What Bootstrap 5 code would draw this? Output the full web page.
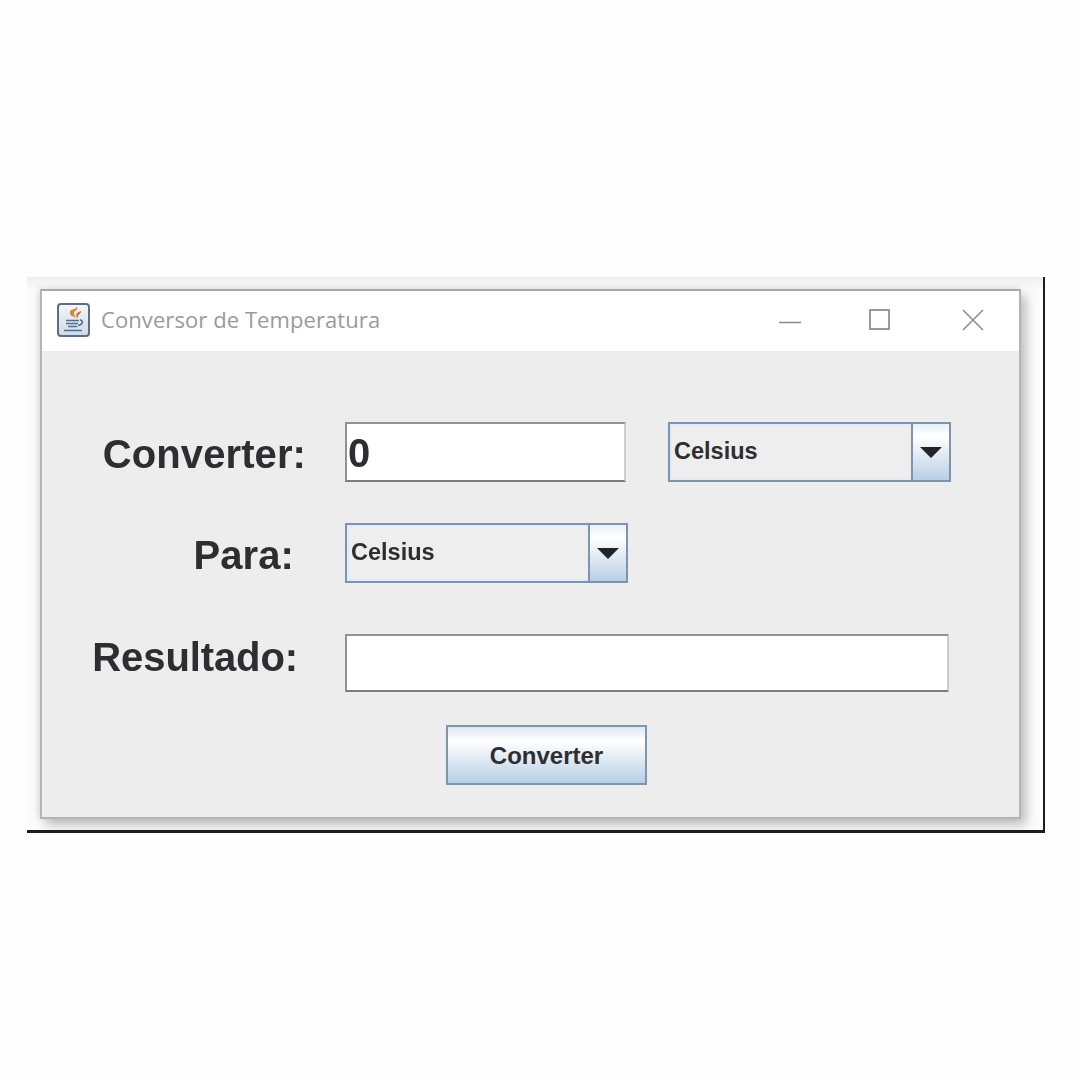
<!DOCTYPE html>
<html lang="pt">
<head>
<meta charset="UTF-8" />
<title>Conversor de Temperatura</title>
<link href="https://cdn.jsdelivr.net/npm/bootstrap@5.3.0/dist/css/bootstrap.min.css" rel="stylesheet" />
<style>
  html, body { background: #fefefe; }
  .shot-area { padding: 277px 0 0 27px; }
  .shot-frame {
    width: 1018px; height: 556px; padding: 12px 0 0 13px;
    border-right: 2px solid #1c1c24; border-bottom: 3px solid #1c1c24;
    background: linear-gradient(180deg, #efefef, #f8f8f8 10px, #fcfcfc 14px);
  }
  .app-window {
    width: 981px; height: 530px; background: #ededed;
    border: 2px solid #b4b4b4; border-top-color: #a8a8a8;
    box-shadow: 5px 6px 11px rgba(0,0,0,.26), -3px -1px 7px rgba(0,0,0,.09);
    filter: blur(.6px);
    font-family: "Liberation Sans", Arial, sans-serif; color: #2e2e32;
  }
  .app-title {
    height: 60px; background: #fff; padding-left: 15px; padding-bottom: 3px;
    font-family: "Open Sans", "Noto Sans", sans-serif; font-size: 22px; letter-spacing: .08px; color: #9a9a9a;
  }
  .app-title-text { margin-left: 11px; }
  .win-btn { width: 93px; height: 57px; }
  .tb-min { margin-left: 6px; }
  .app-body { padding-top: 71px; }
  .form-line { display: flex; align-items: center; }
  .line-1 { height: 60px; }
  .line-2 { height: 60px; margin-top: 41px; }
  .line-3 { height: 58px; margin-top: 51px; }
  .line-4 { height: 60px; margin-top: 33px; padding-left: 404px; }
  .label-col { width: 303px; flex: none; display: flex; justify-content: flex-end; font-weight: 700; font-size: 40px; line-height: 46px; }
  .lbl-converter { padding-right: 39px; padding-top: 3px; letter-spacing: .1px; }
  .lbl-para { padding-right: 51px; padding-top: 4px; letter-spacing: .1px; }
  .lbl-result { padding-right: 47px; padding-bottom: 13px; letter-spacing: -.1px; }
  .java-field.form-control {
    height: 100%; border-radius: 0; padding: 2px 0 0 1px; background: #fff;
    border: 2px solid #929292; border-right-color: #cccccc; border-bottom-color: #7c7c7c;
    font-family: "Liberation Sans", Arial, sans-serif; font-weight: 700; font-size: 40px; color: #2e2e32;
    box-shadow: none;
  }
  .field-short { width: 281px; flex: none; }
  .field-long { width: 604px; flex: none; }
  .java-combo {
    height: 60px; width: 283px; flex: none; display: flex; background: #eeeeee;
    border: 2px solid #7e93ae; box-shadow: inset 0 0 0 2px #e2ecf6;
    font-weight: 700; font-size: 23.5px;
  }
  .combo-gap { margin-left: 42px; }
  .combo-text { flex: 1; padding-left: 4px; }
  .combo-arrow {
    width: 38px; border-left: 2px solid #7e93ae;
    background: linear-gradient(180deg, #e8eff6 0%, #ffffff 22%, #dbe6f1 62%, #b8cfe5 100%);
  }
  .java-btn.btn {
    width: 201px; height: 60px; padding: 2px 0 0; border-radius: 0; border: 2px solid #7f94ae;
    background: linear-gradient(180deg, #dfe8f2 0%, #ffffff 25%, #d9e5f0 65%, #b8cfe5 100%);
    font-family: "Liberation Sans", Arial, sans-serif; font-weight: 700; font-size: 24px; color: #2e2e32;
  }
</style>
</head>
<body>
<div class="shot-area">
  <div class="shot-frame">
    <div class="app-window">
      <div class="app-title d-flex align-items-center">
        <svg width="33" height="34" viewBox="0 0 33 34">
          <defs><linearGradient id="iconBg" x1="0" y1="0" x2="0" y2="1"><stop offset="0" stop-color="#f4f6f9"/><stop offset="1" stop-color="#cfd9e6"/></linearGradient></defs>
          <rect x="1" y="1" width="31" height="32" rx="3" fill="url(#iconBg)" stroke="#5f6d7e" stroke-width="2"/>
          <path d="M20 4c2 3-4 4-3 7 .4 1.400 1.500 2.500 2.500 3.500-4-.5-7.500-2.500-6.500-6 .8-2.500 5.500-2 7-4.500z" fill="#d08a3c"/>
          <path d="M24 8c1 2.500-4 3.500-3 7-3-2-2.500-5.500 3-7z" fill="#c77f30"/>
          <path d="M9 17.500h13M9 20.500h12M11 23.500h9M7 27.500h18" stroke="#4f6f92" stroke-width="1.700" fill="none"/>
          <path d="M23 17c3.500 0 3.500 4.500-2 5.500" stroke="#4f6f92" stroke-width="1.500" fill="none"/>
        </svg>
        <span class="app-title-text">Conversor de Temperatura</span>
        <div class="d-flex ms-auto">
          <div class="win-btn d-flex align-items-center justify-content-center">
            <svg class="tb-min" width="22" height="22" viewBox="0 0 22 22"><path d="M0 13.500h22" stroke="#8f8f8f" stroke-width="1.600"/></svg>
          </div>
          <div class="win-btn d-flex align-items-center justify-content-center">
            <svg width="22" height="22" viewBox="0 0 22 22"><rect x="1" y="1" width="19" height="19" fill="none" stroke="#8f8f8f" stroke-width="1.800"/></svg>
          </div>
          <div class="win-btn d-flex align-items-center justify-content-center">
            <svg width="24" height="24" viewBox="0 0 24 24"><path d="M2 2l20 20M22 2L2 22" stroke="#8f8f8f" stroke-width="1.600"/></svg>
          </div>
        </div>
      </div>
      <div class="app-body">
        <div class="form-line line-1">
          <div class="label-col lbl-converter">Converter:</div>
          <input class="form-control java-field field-short" type="text" value="0" />
          <div class="java-combo combo-gap align-items-center">
            <div class="combo-text">Celsius</div>
            <div class="combo-arrow h-100 d-flex align-items-center justify-content-center">
              <svg width="22" height="11" viewBox="0 0 22 11"><path d="M0 0h22L11 11z" fill="#22232a"/></svg>
            </div>
          </div>
        </div>
        <div class="form-line line-2">
          <div class="label-col lbl-para">Para:</div>
          <div class="java-combo align-items-center">
            <div class="combo-text">Celsius</div>
            <div class="combo-arrow h-100 d-flex align-items-center justify-content-center">
              <svg width="22" height="11" viewBox="0 0 22 11"><path d="M0 0h22L11 11z" fill="#22232a"/></svg>
            </div>
          </div>
        </div>
        <div class="form-line line-3">
          <div class="label-col lbl-result">Resultado:</div>
          <input class="form-control java-field field-long" type="text" value="" />
        </div>
        <div class="form-line line-4">
          <button type="button" class="btn java-btn">Converter</button>
        </div>
      </div>
    </div>
  </div>
</div>
<script src="https://cdn.jsdelivr.net/npm/bootstrap@5.3.0/dist/js/bootstrap.bundle.min.js"></script>
</body>
</html>
